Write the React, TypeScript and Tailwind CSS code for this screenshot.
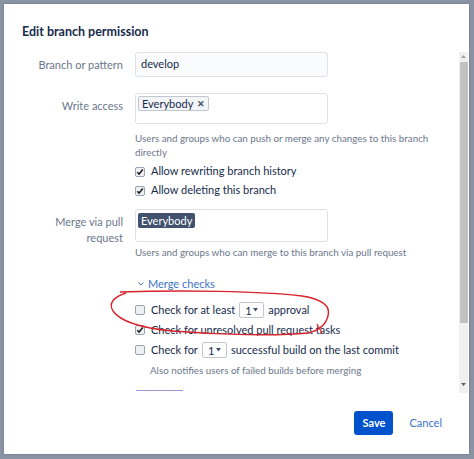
import React from "react";

const font = { fontFamily: 'Lato, "Noto Sans", sans-serif' };

function Box({ checked }: { checked?: boolean }) {
  return (
    <span className="relative inline-flex h-[10px] w-[10px] shrink-0 items-center justify-center rounded-[2px] border border-[#9aa3b1] bg-[#eef0f3]">
      {checked && (
        <svg width="8" height="8" viewBox="0 0 8 8" className="absolute">
          <path d="M1.2 4.2 L3.1 6.1 L6.8 1.6" fill="none" stroke="#222" strokeWidth="1.6" />
        </svg>
      )}
    </span>
  );
}

function Select() {
  return (
    <span className="mx-[4px] inline-flex h-[16px] w-[25px] items-center justify-between rounded-[2px] border border-[#c1c7d0] bg-white pl-[5px] pr-[5px] text-[11px] leading-none text-[#172b4d]">
      <span>1</span>
      <svg width="5" height="4" viewBox="0 0 5 4">
        <path d="M0 0 L5 0 L2.5 3.5 Z" fill="#42526e" />
      </svg>
    </span>
  );
}

export default function App() {
  return (
    <div className="relative h-[459px] w-[474px] overflow-hidden bg-[#8a93a4] pl-[4px] pt-[4px]" style={font}>
      <div className="flex h-[450px] w-[465px] flex-col bg-white shadow-[0_0_2px_rgba(0,0,0,0.25)]">
        {/* header */}
        <div className="h-[48px] pl-[18px] pt-[19px]">
          <h2 className="text-[12.5px] font-bold leading-[18px] text-[#172b4d]">Edit branch permission</h2>
        </div>
        {/* body */}
        <div className="flex h-[341px]">
          <div className="flex-1 text-[11px] text-[#172b4d]">
            <div className="grid grid-cols-[119px_1fr] gap-x-[12px]">
              {/* Branch */}
              <div className="text-right leading-[25px] text-[#6b778c]">Branch or pattern</div>
              <div className="flex h-[25px] w-[193px] items-center rounded-[3px] border border-[#dfe1e6] bg-[#fafbfc] pl-[5px]">develop</div>

              {/* Write access */}
              <div className="mt-[16px] text-right leading-[25px] text-[#6b778c]">Write access</div>
              <div className="mt-[16px]">
                <div className="h-[31px] w-[193px] rounded-[3px] border border-[#dfe1e6] bg-white pl-[2px] pt-[2px]">
                  <span className="inline-flex h-[15px] items-center gap-[4px] rounded-[2px] border border-[#c1c7d0] bg-[#f4f5f7] px-[3px] text-[11px] leading-none">
                    Everybody
                    <span className="text-[9px] font-bold text-[#42526e]">✕</span>
                  </span>
                </div>
                <div className="mt-[7px] text-[9.8px] leading-[14px] text-[#6b778c]">
                  Users and groups who can push or merge any changes to this branch
                  <br />
                  directly
                </div>
                <div className="mt-[3px] flex h-[19px] items-center gap-[6px]">
                  <Box checked />
                  <span>Allow rewriting branch history</span>
                </div>
                <div className="flex h-[19px] items-center gap-[6px]">
                  <Box checked />
                  <span>Allow deleting this branch</span>
                </div>
              </div>

              {/* Merge via PR */}
              <div className="mt-[9px] pt-[5px] text-right leading-[16px] text-[#6b778c]">
                Merge via pull
                <br />
                request
              </div>
              <div className="mt-[9px]">
                <div className="h-[33px] w-[193px] rounded-[3px] border border-[#dfe1e6] bg-white pl-[2px] pt-[3px]">
                  <span className="inline-flex h-[15px] items-center rounded-[2px] bg-[#42526e] px-[3px] text-[11px] leading-none text-white">
                    Everybody
                  </span>
                </div>
                <div className="mt-[3px] text-[9.8px] leading-[14px] text-[#6b778c]">
                  Users and groups who can merge to this branch via pull request
                </div>
                <div className="mt-[16px] flex h-[18px] items-center gap-[4px] pl-[3px] text-[#3b73c8]">
                  <svg width="6" height="4" viewBox="0 0 6 4">
                    <path d="M0.5 0.5 L3 3 L5.5 0.5" fill="none" stroke="#3b73c8" strokeWidth="1" />
                  </svg>
                  <span>Merge checks</span>
                </div>
                <div className="mt-[7px] flex h-[20px] items-center gap-[6px]">
                  <Box />
                  <span className="flex items-center">
                    Check for at least
                    <Select />
                    approval
                  </span>
                </div>
                <div className="flex h-[20px] items-center gap-[6px]">
                  <Box checked />
                  <span>Check for unresolved pull request tasks</span>
                </div>
                <div className="flex h-[20px] items-center gap-[6px]">
                  <Box />
                  <span className="flex items-center">
                    Check for
                    <Select />
                    successful build on the last commit
                  </span>
                </div>
                <div className="mt-[3px] pl-[15px] text-[9.8px] leading-[14px] text-[#6b778c]">
                  Also notifies users of failed builds before merging
                </div>
                <div className="ml-[1px] mt-[13px] h-px w-[47px] bg-[#9d97d8]" />
              </div>
            </div>
          </div>
          {/* scrollbar */}
          <div className="mr-[1px] flex w-[9px] flex-col items-center bg-[#f0f0f0]">
            <div className="flex h-[9px] items-center justify-center">
              <svg width="5" height="3" viewBox="0 0 5 3">
                <path d="M0 3 L5 3 L2.5 0 Z" fill="#a0a0a0" />
              </svg>
            </div>
            <div className="mt-[1px] h-[261px] w-[8px] bg-[#c1c1c1]" />
            <div className="flex-1" />
            <div className="mb-[4px] flex h-[9px] items-center justify-center">
              <svg width="5" height="3" viewBox="0 0 5 3">
                <path d="M0 0 L5 0 L2.5 3 Z" fill="#606060" />
              </svg>
            </div>
          </div>
        </div>
        {/* footer */}
        <div className="flex items-center justify-end gap-[16px] pr-[27px] pt-[18px]">
          <button className="h-[24px] w-[39px] rounded-[3px] bg-[#0052cc] text-[11px] font-bold text-white">Save</button>
          <button className="text-[11px] text-[#3b73c8]">Cancel</button>
        </div>
      </div>
      {/* red annotation */}
      <svg className="pointer-events-none absolute left-0 top-0" width="474" height="459" viewBox="0 0 474 459">
        <path
          d="M120 292 C180 290, 262 291, 302 296 C322 299, 331 306, 328 316 C326 324, 321 330, 308 333 C278 336, 222 335, 172 331 C142 328, 120 321, 113 311 C108 303, 114 297, 126 293"
          fill="none"
          stroke="#d8232a"
          strokeWidth="1.4"
        />
        <path d="M317 324 L322 333" fill="none" stroke="#d8232a" strokeWidth="1.2" />
      </svg>
    </div>
  );
}
